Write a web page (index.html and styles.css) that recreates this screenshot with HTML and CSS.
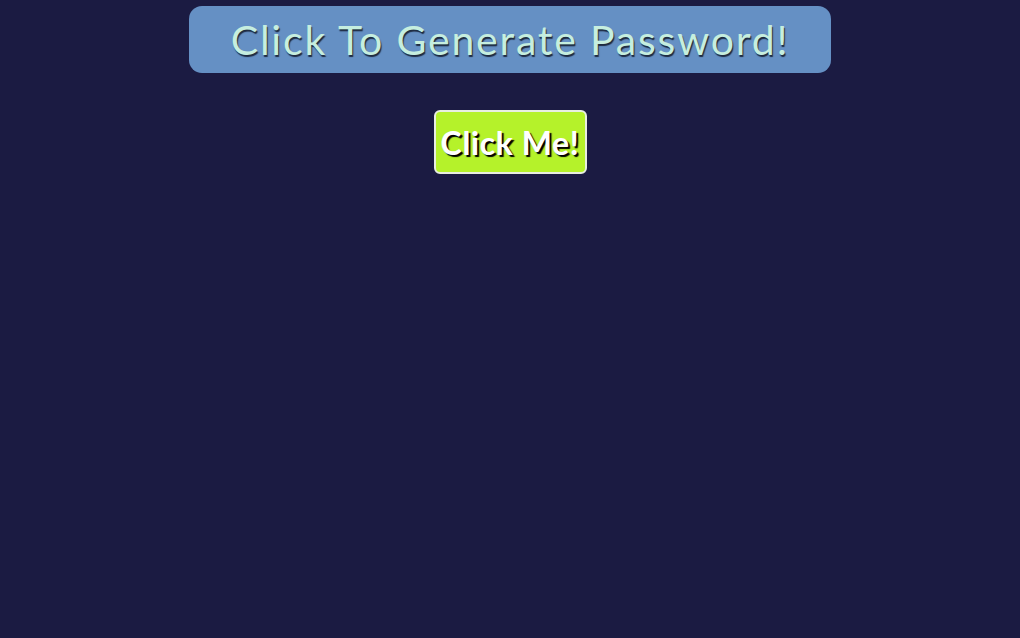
FILE: index.html
```html
<!DOCTYPE html>
<html lang="en">
<head>
  <meta charset="UTF-8">
  <title>Password Generator</title>
  <link rel="stylesheet" href="styles.css">
</head>
<body>
  <div class="page">
    <h1 class="title">Click To Generate Password!</h1>
    <button class="gen-btn" id="generate">Click Me!</button>
    <p class="output" id="output"></p>
  </div>
</body>
</html>
```
FILE: styles.css
```css
body {
  margin: 0;
  padding: 0;
  background: #1b1b42;
  font-family: "Lato", "Open Sans", sans-serif;
}

.page {
  display: flex;
  flex-direction: column;
  align-items: center;
  padding-top: 6px;
}

.title {
  box-sizing: border-box;
  width: 642px;
  height: 67px;
  margin: 0;
  background: #6590c4;
  border-radius: 13px;
  color: #c6eedf;
  font-size: 41px;
  font-weight: 400;
  line-height: 67px;
  text-align: center;
  letter-spacing: 1.8px;
  text-shadow: 1px 2px 1px #1e2a40;
}

.gen-btn {
  box-sizing: border-box;
  width: 153px;
  height: 64px;
  margin-top: 37px;
  background: #b5f22a;
  border: 2px solid #e8eee0;
  border-radius: 6px;
  color: #fff;
  font-family: "Lato", sans-serif;
  font-size: 32px;
  font-weight: 700;
  letter-spacing: 0.6px;
  text-shadow: 2px 2px 1px #000;
  cursor: pointer;
  padding: 0;
}

.output {
  color: #fff;
}
```
